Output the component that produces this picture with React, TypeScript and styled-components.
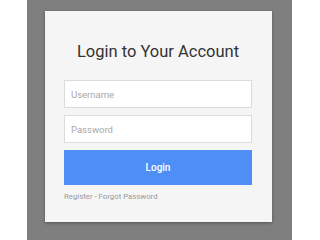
import React from "react";
import styled, { createGlobalStyle } from "styled-components";

const Global = createGlobalStyle`
  html, body { margin: 0; padding: 0; background: #ffffff; }
  body { font-family: Roboto, "Liberation Sans", Arial, sans-serif; }
  * { box-sizing: border-box; }
`;

const Backdrop = styled.div`
  margin-left: 27px;
  width: 265px;
  height: 240px;
  background: #7f7f7f;
  padding: 11px 0 0 18px;
`;

const Card = styled.div`
  width: 227px;
  height: 211px;
  background: #f5f5f5;
  box-shadow: 0 1px 3px rgba(0, 0, 0, 0.35);
  padding: 0 20px 0 19px;
  display: flex;
  flex-direction: column;
`;

const Title = styled.h1`
  margin: 31px 0 0;
  font-size: 16.5px;
  line-height: 20px;
  font-weight: 400;
  color: #333333;
  text-align: center;
`;

const Form = styled.form`
  margin-top: 18px;
  display: flex;
  flex-direction: column;
  gap: 7px;
`;

const Input = styled.input`
  height: 28px;
  width: 100%;
  border: 1px solid #dcdcdc;
  background: #ffffff;
  padding: 0 6px;
  font-family: Roboto, "Liberation Sans", Arial, sans-serif;
  font-size: 9.5px;
  color: #333;
  outline: none;
  &::placeholder { color: #a9a9a9; }
`;

const Button = styled.button`
  height: 35px;
  width: 100%;
  border: none;
  background: #4d8ff7;
  color: #ffffff;
  font-family: Roboto, "Liberation Sans", Arial, sans-serif;
  font-size: 10px;
  font-weight: 500;
  cursor: pointer;
`;

const Links = styled.div`
  margin-top: 6px;
  font-size: 7.8px;
  line-height: 12px;
  color: #9a9a9a;
`;

export default function App() {
  return (
    <>
      <Global />
      <Backdrop>
        <Card>
          <Title>Login to Your Account</Title>
          <Form onSubmit={(e) => e.preventDefault()}>
            <Input type="text" placeholder="Username" />
            <Input type="password" placeholder="Password" />
            <Button type="submit">Login</Button>
          </Form>
          <Links>Register - Forgot Password</Links>
        </Card>
      </Backdrop>
    </>
  );
}
